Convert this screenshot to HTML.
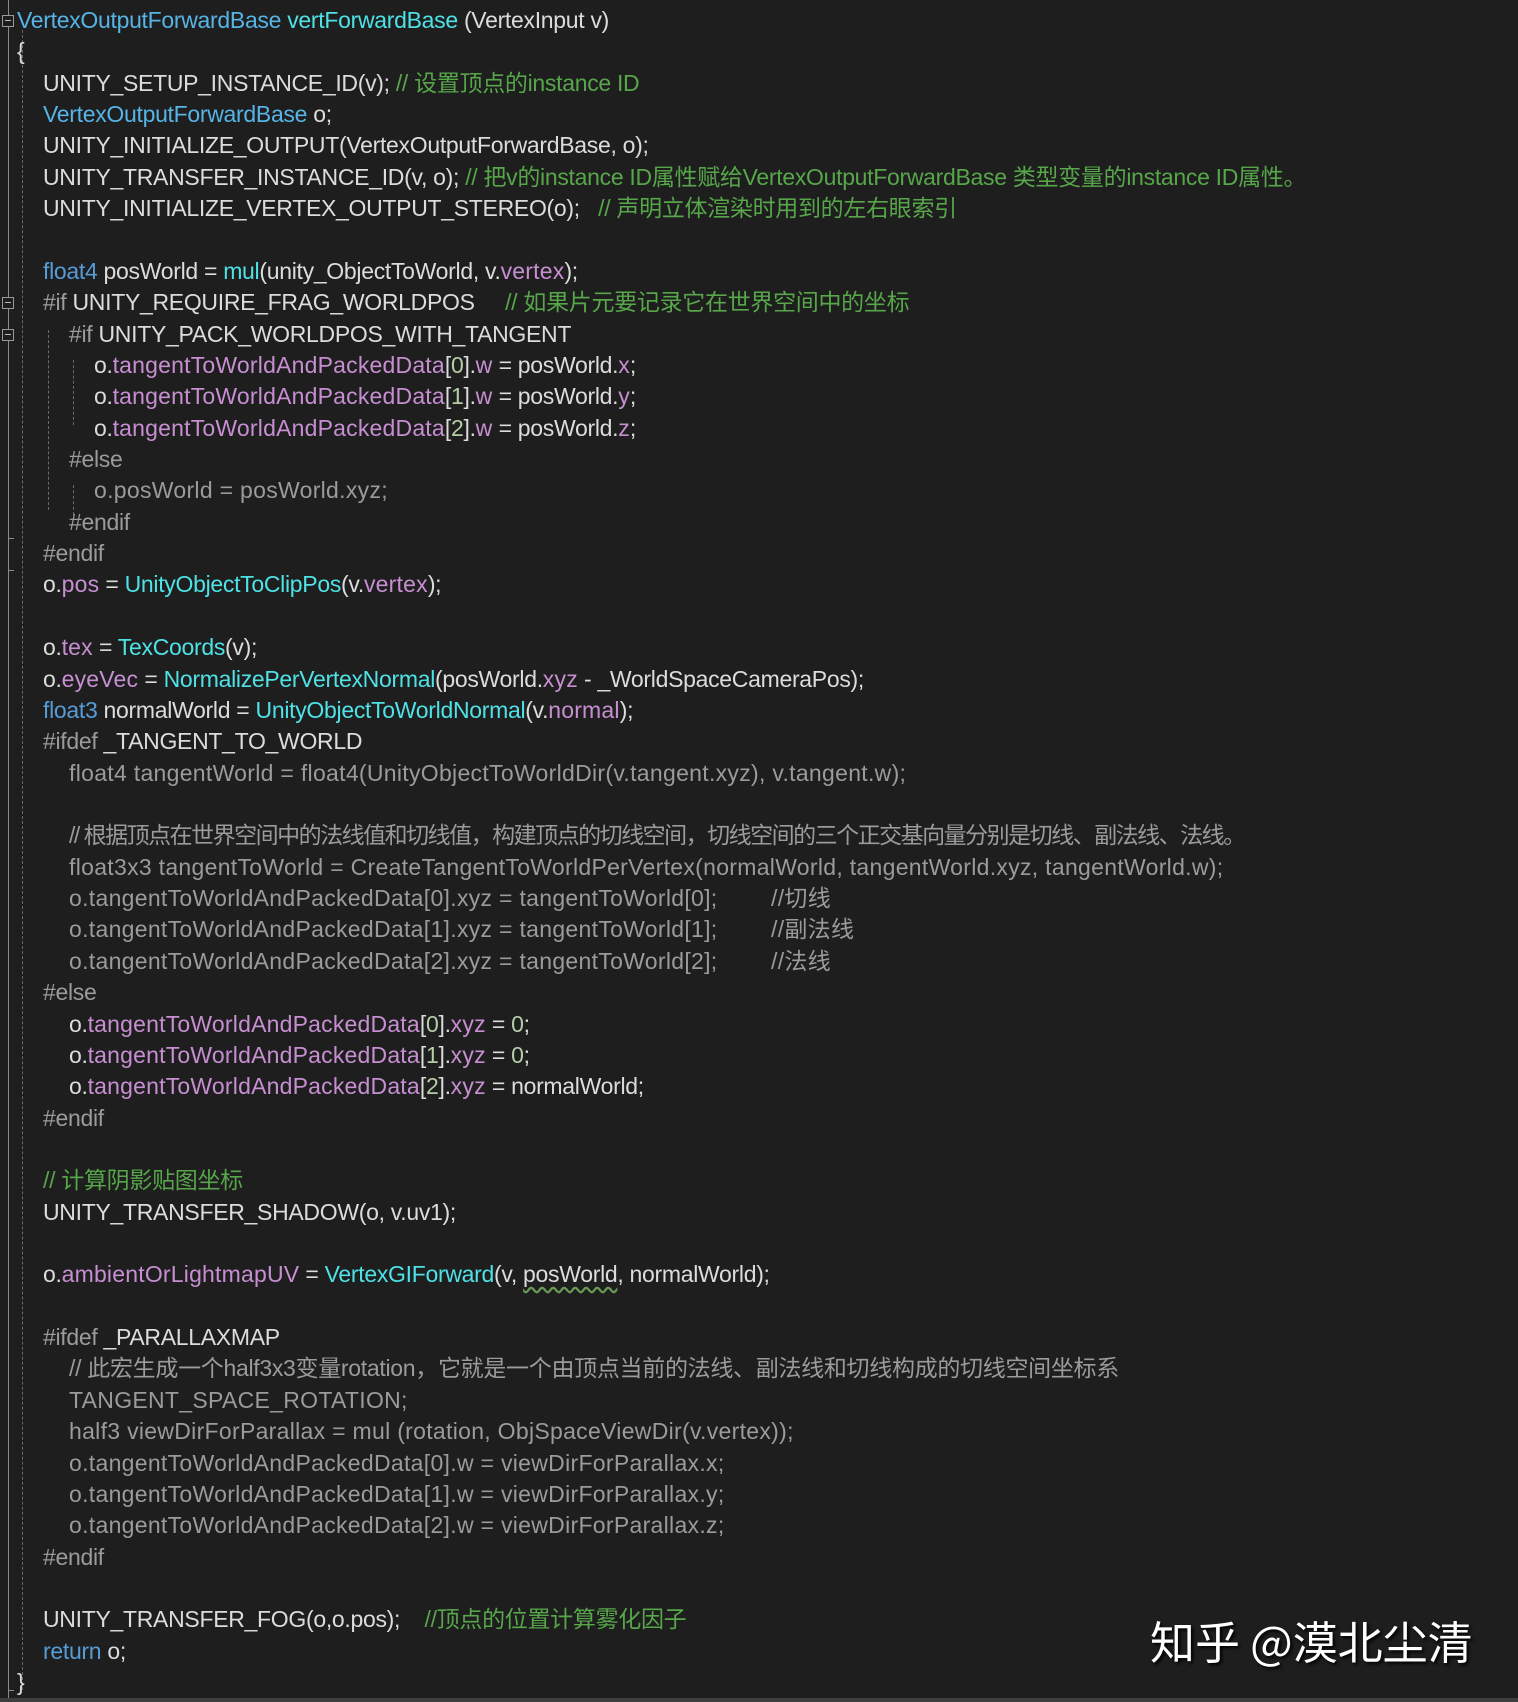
<!DOCTYPE html>
<html><head><meta charset="utf-8"><style>
html,body{margin:0;padding:0;background:#1e1e1e;}
body{width:1518px;height:1702px;position:relative;overflow:hidden;font-family:"Liberation Sans","Noto Sans CJK SC",sans-serif;font-size:23px;letter-spacing:-0.3px;color:#dcdcdc;}
#code{position:absolute;left:0;top:5px;}
.l{height:31.37px;line-height:31.37px;white-space:pre;position:relative;}
.i0{padding-left:17px}.i1{padding-left:43px}.i2{padding-left:69px}.i3{padding-left:94px}
.t{color:#56b4e6}.f{color:#4ee2e6}.k{color:#569cd6}.m{color:#c78fd2;letter-spacing:0.2px}.n{color:#b5cea8}.c{color:#57a64a}.p{color:#9b9b9b}.g{color:#9b9b9b;letter-spacing:0.3px}
.tab{position:absolute;left:771px;top:0}
.sq{text-decoration:underline wavy #6a9955;text-underline-offset:4px}
.gut{position:absolute;left:8px;top:0;width:1px;height:1698px;background:#8a8a8a}
.dash{position:absolute;left:22px;top:30px;width:0;height:1660px;border-left:1px dashed #6a6a6a}
.dash2{position:absolute;left:48px;top:330px;width:0;height:180px;border-left:1px dashed #6a6a6a}
.dash3{position:absolute;left:73px;top:360px;width:0;height:65px;border-left:1px dashed #6a6a6a}
.dash4{position:absolute;left:73px;top:485px;width:0;height:30px;border-left:1px dashed #6a6a6a}
.box{position:absolute;left:2px;width:10px;height:10px;border:1px solid #9a9a9a;background:#1e1e1e}
.box:after{content:"";position:absolute;left:2px;top:4px;width:6px;height:1px;background:#bbb}
.tick{position:absolute;left:8px;width:6px;height:1px;background:#8a8a8a}
.bar{position:absolute;left:0;top:1698px;width:1518px;height:4px;background:#3e3e3e}
.wm{position:absolute;left:1150px;top:1612px;font-family:"Noto Sans CJK SC",sans-serif;font-size:45px;letter-spacing:0;color:#fff;text-shadow:2px 2px 3px #000;line-height:56px}
.zh{letter-spacing:-1.5px}
</style></head><body>
<div class="gut"></div><div class="dash"></div><div class="dash2"></div><div class="dash3"></div><div class="dash4"></div>
<div class="box" style="top:15px"></div><div class="box" style="top:297px"></div><div class="box" style="top:329px"></div>
<div class="tick" style="top:538px"></div><div class="tick" style="top:570px"></div><div class="tick" style="top:1690px"></div>
<div id="code">
<div class="l i0"><span class="t">VertexOutputForwardBase</span> <span class="f">vertForwardBase</span> (VertexInput v)</div>
<div class="l i0">{</div>
<div class="l i1">UNITY_SETUP_INSTANCE_ID(v); <span class="c">// 设置顶点的instance ID</span></div>
<div class="l i1"><span class="t">VertexOutputForwardBase</span> o;</div>
<div class="l i1">UNITY_INITIALIZE_OUTPUT(VertexOutputForwardBase, o);</div>
<div class="l i1">UNITY_TRANSFER_INSTANCE_ID(v, o); <span class="c">// 把v的instance ID属性赋给VertexOutputForwardBase 类型变量的instance ID属性。</span></div>
<div class="l i1">UNITY_INITIALIZE_VERTEX_OUTPUT_STEREO(o);   <span class="c">// 声明立体渲染时用到的左右眼索引</span></div>
<div class="l i1"> </div>
<div class="l i1"><span class="k">float4</span> posWorld = <span class="f">mul</span>(unity_ObjectToWorld, v.<span class="m">vertex</span>);</div>
<div class="l i1"><span class="p">#if</span> UNITY_REQUIRE_FRAG_WORLDPOS     <span class="c">// 如果片元要记录它在世界空间中的坐标</span></div>
<div class="l i2"><span class="p">#if</span> UNITY_PACK_WORLDPOS_WITH_TANGENT</div>
<div class="l i3">o.<span class="m">tangentToWorldAndPackedData</span>[<span class="n">0</span>].<span class="m">w</span> = posWorld.<span class="m">x</span>;</div>
<div class="l i3">o.<span class="m">tangentToWorldAndPackedData</span>[<span class="n">1</span>].<span class="m">w</span> = posWorld.<span class="m">y</span>;</div>
<div class="l i3">o.<span class="m">tangentToWorldAndPackedData</span>[<span class="n">2</span>].<span class="m">w</span> = posWorld.<span class="m">z</span>;</div>
<div class="l i2 p">#else</div>
<div class="l i3 g">o.posWorld = posWorld.xyz;</div>
<div class="l i2 p">#endif</div>
<div class="l i1 p">#endif</div>
<div class="l i1">o.<span class="m">pos</span> = <span class="f">UnityObjectToClipPos</span>(v.<span class="m">vertex</span>);</div>
<div class="l i1"> </div>
<div class="l i1">o.<span class="m">tex</span> = <span class="f">TexCoords</span>(v);</div>
<div class="l i1">o.<span class="m">eyeVec</span> = <span class="f">NormalizePerVertexNormal</span>(posWorld.<span class="m">xyz</span> - _WorldSpaceCameraPos);</div>
<div class="l i1"><span class="k">float3</span> normalWorld = <span class="f">UnityObjectToWorldNormal</span>(v.<span class="m">normal</span>);</div>
<div class="l i1"><span class="p">#ifdef</span> _TANGENT_TO_WORLD</div>
<div class="l i2 g">float4 tangentWorld = float4(UnityObjectToWorldDir(v.tangent.xyz), v.tangent.w);</div>
<div class="l i2"> </div>
<div class="l i2 p zh">// 根据顶点在世界空间中的法线值和切线值，构建顶点的切线空间，切线空间的三个正交基向量分别是切线、副法线、法线。</div>
<div class="l i2 g">float3x3 tangentToWorld = CreateTangentToWorldPerVertex(normalWorld, tangentWorld.xyz, tangentWorld.w);</div>
<div class="l i2 g">o.tangentToWorldAndPackedData[0].xyz = tangentToWorld[0];<span class="tab">//切线</span></div>
<div class="l i2 g">o.tangentToWorldAndPackedData[1].xyz = tangentToWorld[1];<span class="tab">//副法线</span></div>
<div class="l i2 g">o.tangentToWorldAndPackedData[2].xyz = tangentToWorld[2];<span class="tab">//法线</span></div>
<div class="l i1 p">#else</div>
<div class="l i2">o.<span class="m">tangentToWorldAndPackedData</span>[<span class="n">0</span>].<span class="m">xyz</span> = <span class="n">0</span>;</div>
<div class="l i2">o.<span class="m">tangentToWorldAndPackedData</span>[<span class="n">1</span>].<span class="m">xyz</span> = <span class="n">0</span>;</div>
<div class="l i2">o.<span class="m">tangentToWorldAndPackedData</span>[<span class="n">2</span>].<span class="m">xyz</span> = normalWorld;</div>
<div class="l i1 p">#endif</div>
<div class="l i1"> </div>
<div class="l i1 c">// 计算阴影贴图坐标</div>
<div class="l i1">UNITY_TRANSFER_SHADOW(o, v.uv1);</div>
<div class="l i1"> </div>
<div class="l i1">o.<span class="m">ambientOrLightmapUV</span> = <span class="f">VertexGIForward</span>(v, <span class="sq">posWorld</span>, normalWorld);</div>
<div class="l i1"> </div>
<div class="l i1"><span class="p">#ifdef</span> _PARALLAXMAP</div>
<div class="l i2 p">// 此宏生成一个half3x3变量rotation，它就是一个由顶点当前的法线、副法线和切线构成的切线空间坐标系</div>
<div class="l i2 g">TANGENT_SPACE_ROTATION;</div>
<div class="l i2 g">half3 viewDirForParallax = mul (rotation, ObjSpaceViewDir(v.vertex));</div>
<div class="l i2 g">o.tangentToWorldAndPackedData[0].w = viewDirForParallax.x;</div>
<div class="l i2 g">o.tangentToWorldAndPackedData[1].w = viewDirForParallax.y;</div>
<div class="l i2 g">o.tangentToWorldAndPackedData[2].w = viewDirForParallax.z;</div>
<div class="l i1 p">#endif</div>
<div class="l i1"> </div>
<div class="l i1">UNITY_TRANSFER_FOG(o,o.pos);    <span class="c">//顶点的位置计算雾化因子</span></div>
<div class="l i1"><span class="k">return</span> o;</div>
<div class="l i0">}</div>
</div>
<div class="wm">知乎 @漠北尘清</div>
<div class="bar"></div>
</body></html>
